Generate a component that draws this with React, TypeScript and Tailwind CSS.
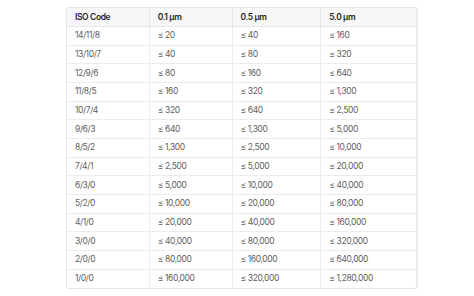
import React from "react";

const rows: [string, string, string, string][] = [
  ["14/11/8", "≤ 20", "≤ 40", "≤ 160"],
  ["13/10/7", "≤ 40", "≤ 80", "≤ 320"],
  ["12/9/6", "≤ 80", "≤ 160", "≤ 640"],
  ["11/8/5", "≤ 160", "≤ 320", "≤ 1,300"],
  ["10/7/4", "≤ 320", "≤ 640", "≤ 2,500"],
  ["9/6/3", "≤ 640", "≤ 1,300", "≤ 5,000"],
  ["8/5/2", "≤ 1,300", "≤ 2,500", "≤ 10,000"],
  ["7/4/1", "≤ 2,500", "≤ 5,000", "≤ 20,000"],
  ["6/3/0", "≤ 5,000", "≤ 10,000", "≤ 40,000"],
  ["5/2/0", "≤ 10,000", "≤ 20,000", "≤ 80,000"],
  ["4/1/0", "≤ 20,000", "≤ 40,000", "≤ 160,000"],
  ["3/0/0", "≤ 40,000", "≤ 80,000", "≤ 320,000"],
  ["2/0/0", "≤ 80,000", "≤ 160,000", "≤ 640,000"],
  ["1/0/0", "≤ 160,000", "≤ 320,000", "≤ 1,280,000"],
];

const widths = ["w-[83px]", "w-[83px]", "w-[89px]", "w-[95px]"];

export default function App() {
  return (
    <div
      className="w-[474px] h-[296px] bg-white pt-[7px] pl-[66px]"
      style={{ fontFamily: "Inter, 'Noto Sans', sans-serif" }}
    >
      <div className="w-[351px] border border-[#e6e6e6] rounded-[2px] overflow-hidden text-[8.5px] tracking-[-0.045em] shadow-[2px_0_2px_rgba(0,0,0,0.04)]">
        <div className="flex h-[19px] bg-[#f7f7f8] border-b border-[#e6e6e6] font-semibold text-[#1f1f1f]">
          {["ISO Code", "0.1 µm", "0.5 µm", "5.0 µm"].map((h, i) => (
            <div
              key={i}
              className={`${widths[i]} ${i < 3 ? "border-r border-[#e6e6e6]" : ""} flex items-center px-[8px]`}
            >
              {h}
            </div>
          ))}
        </div>
        {rows.map((r, ri) => (
          <div
            key={ri}
            className={`flex h-[18.67px] text-[#5e5e5e] ${ri < rows.length - 1 ? "border-b border-[#ececec]" : ""}`}
          >
            {r.map((c, i) => (
              <div
                key={i}
                className={`${widths[i]} ${i < 3 ? "border-r border-[#ececec]" : ""} flex items-center px-[8px]`}
              >
                {c}
              </div>
            ))}
          </div>
        ))}
      </div>
    </div>
  );
}
